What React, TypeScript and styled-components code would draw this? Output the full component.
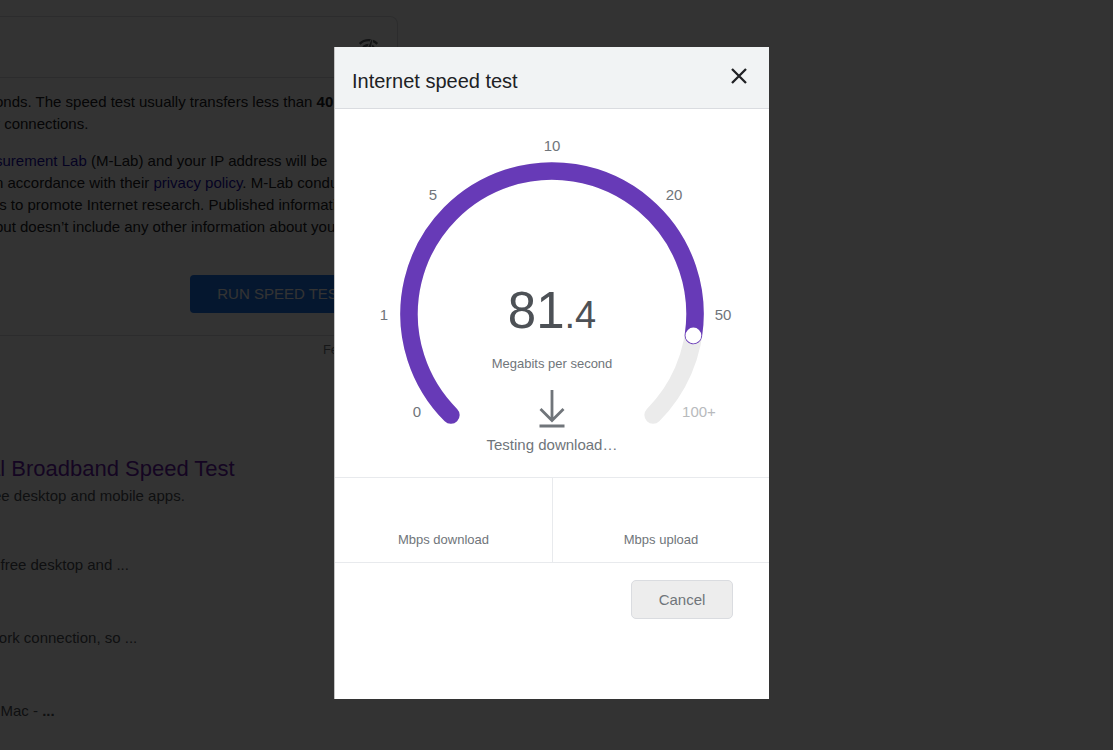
import React from "react";
import styled, { createGlobalStyle } from "styled-components";

const GlobalStyle = createGlobalStyle`
  * { box-sizing: border-box; }
  body {
    margin: 0;
    background: #fff;
    color: #202124;
    font-family: "Liberation Sans", Arial, sans-serif;
    font-size: 15px;
    line-height: 22px;
  }
  p, h2, h3 { margin: 0; font-weight: 400; }
`;

const Page = styled.main`
  height: 100vh;
  overflow: hidden;
  padding-top: 16px;
`;

const Card = styled.section`
  width: 398px;
  border: 1px solid #dadce0;
  border-left: 0;
  border-radius: 0 8px 8px 0;
  overflow: hidden;
`;

const CardHeader = styled.div`
  display: flex;
  justify-content: flex-end;
  align-items: center;
  height: 61px;
  padding: 0 18px 4px;
  border-bottom: 1px solid #dadce0;
  color: #5f6368;
`;

const CardBody = styled.div`
  display: flex;
  flex-direction: column;
  gap: 15px;
  padding: 13px 0 22px;
  margin-left: -5px;
`;

const Paragraph = styled.p`
  white-space: nowrap;
`;

const Link = styled.a<{ $visited?: boolean }>`
  color: ${(p) => (p.$visited ? "#681da8" : "#1a0dab")};
  text-decoration: none;
`;

const RunButton = styled.button`
  align-self: flex-end;
  height: 38px;
  margin-top: 22px;
  margin-right: 23px;
  padding: 0 27px;
  border: 0;
  border-radius: 4px;
  background: #1a73e8;
  color: #fff;
  font: inherit;
`;

const Feedback = styled.p`
  width: 398px;
  padding: 3px 18px 0 0;
  text-align: right;
  font-size: 13px;
  color: #70757a;
`;

const Results = styled.div`
  display: flex;
  flex-direction: column;
  gap: 51px;
  margin: 94px 0 0 -12px;
  white-space: nowrap;
  color: #4d5156;
`;

const FeaturedResult = styled.div`
  margin-bottom: -4px;
`;

const ResultTitle = styled.h3`
  font-size: 22px;
  line-height: 28px;
  margin-bottom: 2px;
`;

const Scrim = styled.div`
  position: fixed;
  inset: 0;
  display: flex;
  justify-content: center;
  align-items: center;
  padding: 0 10px 4px 0;
  background: rgba(0, 0, 0, 0.8);
`;

const Dialog = styled.section`
  width: 435px;
  background: #fff;
  border-left: 1px solid #c4c4c4;
`;

const DialogHeader = styled.header`
  display: flex;
  justify-content: space-between;
  align-items: flex-start;
  padding: 17px 18px 12px 17px;
  border-bottom: 1px solid #dadce0;
  background: #f1f3f4;
`;

const DialogTitle = styled.h2`
  padding-top: 2px;
  font-size: 20px;
  line-height: 30px;
`;

const CloseButton = styled.button`
  display: flex;
  padding: 0;
  border: 0;
  background: none;
  color: #202124;
`;

const GaugeArea = styled.div`
  display: grid;
  justify-items: center;

  & > * { grid-area: 1 / 1; }
`;

const GaugeLabel = styled.text<{ $muted?: boolean }>`
  font-size: 15px;
  text-anchor: middle;
  fill: ${(p) => (p.$muted ? "#b8babd" : "#70757a")};
`;

const Reading = styled.div`
  display: flex;
  flex-direction: column;
  align-items: center;
  padding: 176px 0 22px;
  color: #70757a;
`;

const Speed = styled.p`
  margin-bottom: 19px;
  font-size: 51px;
  line-height: 52px;
  color: #4d5156;
`;

const Decimals = styled.span`
  font-size: 38px;
  line-height: 38px;
`;

const Unit = styled.p`
  margin-bottom: 18px;
  font-size: 13px;
  line-height: 16px;
`;

const Status = styled.p`
  margin-top: 7px;
  line-height: 20px;
`;

const Totals = styled.div`
  display: grid;
  grid-template-columns: 1fr 1fr;
  border: 1px solid #e8eaed;
  border-width: 1px 0;
`;

const Total = styled.div`
  padding: 53px 0 13px;
  text-align: center;
  font-size: 13px;
  line-height: 18px;
  color: #70757a;

  & + & { border-left: 1px solid #e8eaed; }
`;

const DialogFooter = styled.footer`
  display: flex;
  justify-content: flex-end;
  padding: 17px 36px 80px;
`;

const CancelButton = styled.button`
  width: 102px;
  height: 39px;
  border: 1px solid #dadce0;
  border-radius: 5px;
  background: #ededed;
  color: #70757a;
  font: inherit;
`;

const labels = [
  { text: "0", x: 83, y: 308 },
  { text: "1", x: 50, y: 211 },
  { text: "5", x: 99, y: 91 },
  { text: "10", x: 218, y: 42 },
  { text: "20", x: 340, y: 91 },
  { text: "50", x: 389, y: 211 },
  { text: "100+", x: 365, y: 308, muted: true },
];

function Gauge() {
  return (
    <svg width="434" height="368" viewBox="1 0 434 368" role="img" aria-label="Download speed gauge">
      <g fill="none" strokeWidth="17.5" strokeLinecap="round">
        <path d="M116.9 306.1A143 143 0 1 1 319.1 306.1" stroke="#ebebeb" />
        <path d="M116.9 306.1A143 143 0 1 1 359.4 226.5" stroke="#673ab7" />
      </g>
      <circle cx="359.4" cy="226.5" r="7.9" fill="#fff" />
      {labels.map((l) => (
        <GaugeLabel key={l.text} x={l.x} y={l.y} $muted={l.muted}>
          {l.text}
        </GaugeLabel>
      ))}
    </svg>
  );
}

function NetworkIcon() {
  return (
    <svg width="21" height="21" viewBox="0 0 24 24" fill="currentColor" aria-hidden="true">
      <path d="M15.9 5c-.17 0-.32.09-.41.23l-.07.15-5.18 11.65c-.16.29-.26.61-.26.96 0 1.11.9 2.01 2.01 2.01.96 0 1.77-.68 1.96-1.59l.01-.03L16.4 5.5c0-.28-.22-.5-.5-.5zM1 9l2 2c2.88-2.88 6.79-4.08 10.53-3.62l1.19-2.68C9.89 3.84 4.74 5.27 1 9zm20 2l2-2c-1.64-1.64-3.55-2.82-5.59-3.57l-.53 2.82c1.5.62 2.9 1.53 4.12 2.75zm-4 4l2-2c-.8-.8-1.7-1.42-2.66-1.89l-.55 2.92c.42.27.83.59 1.21.97zM5 13l2 2c1.13-1.13 2.56-1.79 4.03-2l1.28-2.88c-2.63-.08-5.3.87-7.31 2.88z" />
    </svg>
  );
}

export default function App() {
  return (
    <>
      <GlobalStyle />
      <Page>
        <Card>
          <CardHeader>
            <NetworkIcon />
          </CardHeader>
          <CardBody>
            <Paragraph>
              onds. The speed test usually transfers less than <b>40 MB</b>
              <br />r connections.
            </Paragraph>
            <Paragraph>
              <Link href="#mlab">surement Lab</Link> (M-Lab) and your IP address will be
              <br />n accordance with their <Link href="#privacy">privacy policy</Link>. M-Lab conducts
              <br />ts to promote Internet research. Published information
              <br />but doesn’t include any other information about you
            </Paragraph>
            <RunButton>RUN SPEED TEST</RunButton>
          </CardBody>
        </Card>
        <Feedback>Feedback</Feedback>
        <Results>
          <FeaturedResult>
            <ResultTitle>
              <Link $visited href="#result">al Broadband Speed Test</Link>
            </ResultTitle>
            <p>ree desktop and mobile apps.</p>
          </FeaturedResult>
          <p>d free desktop and ...</p>
          <p>work connection, so ...</p>
          <p>d Mac - <b>...</b></p>
        </Results>
      </Page>
      <Scrim>
        <Dialog role="dialog" aria-labelledby="dialog-title">
          <DialogHeader>
            <DialogTitle id="dialog-title">Internet speed test</DialogTitle>
            <CloseButton aria-label="Close">
              <svg width="24" height="24" viewBox="0 0 24 24" fill="none" stroke="currentColor" strokeWidth="2.3">
                <path d="M5 5L19 19M19 5L5 19" />
              </svg>
            </CloseButton>
          </DialogHeader>
          <GaugeArea>
            <Gauge />
            <Reading>
              <Speed>
                81<Decimals>.4</Decimals>
              </Speed>
              <Unit>Megabits per second</Unit>
              <svg width="26" height="38" viewBox="0 0 26 38" fill="none" stroke="currentColor" strokeWidth="2.8">
                <path d="M13 0V30M1.5 19L13 30.5L24.5 19M0.5 36H25.5" />
              </svg>
              <Status>Testing download…</Status>
            </Reading>
          </GaugeArea>
          <Totals>
            <Total>Mbps download</Total>
            <Total>Mbps upload</Total>
          </Totals>
          <DialogFooter>
            <CancelButton>Cancel</CancelButton>
          </DialogFooter>
        </Dialog>
      </Scrim>
    </>
  );
}
